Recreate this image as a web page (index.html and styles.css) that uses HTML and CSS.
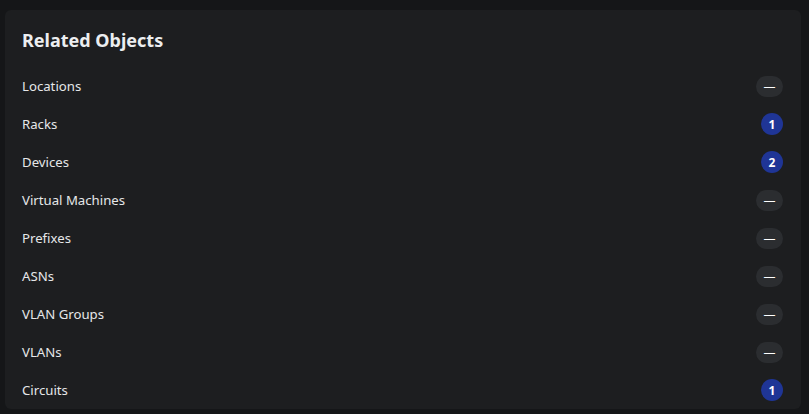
FILE: index.html
```html
<!DOCTYPE html>
<html lang="en">
<head>
  <meta charset="UTF-8">
  <title>Related Objects</title>
  <link rel="stylesheet" href="styles.css">
</head>
<body>
  <div class="card">
    <h2 class="card-title">Related Objects</h2>
    <!-- related object counts -->
    <ul class="related">
      <li><a href="#">Locations</a><span class="badge empty">&mdash;</span></li>
      <li><a href="#">Racks</a><span class="badge count">1</span></li>
      <li><a href="#">Devices</a><span class="badge count">2</span></li>
      <li><a href="#">Virtual Machines</a><span class="badge empty">&mdash;</span></li>
      <li><a href="#">Prefixes</a><span class="badge empty">&mdash;</span></li>
      <li><a href="#">ASNs</a><span class="badge empty">&mdash;</span></li>
      <li><a href="#">VLAN Groups</a><span class="badge empty">&mdash;</span></li>
      <li><a href="#">VLANs</a><span class="badge empty">&mdash;</span></li>
      <li><a href="#">Circuits</a><span class="badge count">1</span></li>
    </ul>
  </div>
</body>
</html>
```

FILE: styles.css
```css
html, body {
  margin: 0;
  background: #151618;
}
body {
  padding: 10px 8px 6px 5px;
  font-family: "Noto Sans", "Open Sans", sans-serif;
  color: #e6e7e9;
}
a {
  text-decoration: none;
  color: inherit;
}
.card {
  background: #1d1e20;
  border-radius: 6px;
  padding: 16px 18px 0 17px;
}
.card-title {
  margin: 0 0 13px;
  font-size: 18px;
  font-weight: 700;
  line-height: 28px;
  color: #eceef0;
}
.related {
  list-style: none;
  margin: 0;
  padding: 0;
}
.related li {
  display: flex;
  justify-content: space-between;
  align-items: center;
  height: 38px;
  font-size: 13.2px;
}
.badge {
  display: inline-flex;
  align-items: center;
  justify-content: center;
  height: 21px;
  border-radius: 11px;
  font-size: 12px;
  font-weight: 700;
  color: #fff;
}
.badge.empty {
  width: 27px;
  background: #2b2d30;
  font-weight: 400;
}
.badge.count {
  width: 22px;
  height: 22px;
  background: #1f3596;
}
```
